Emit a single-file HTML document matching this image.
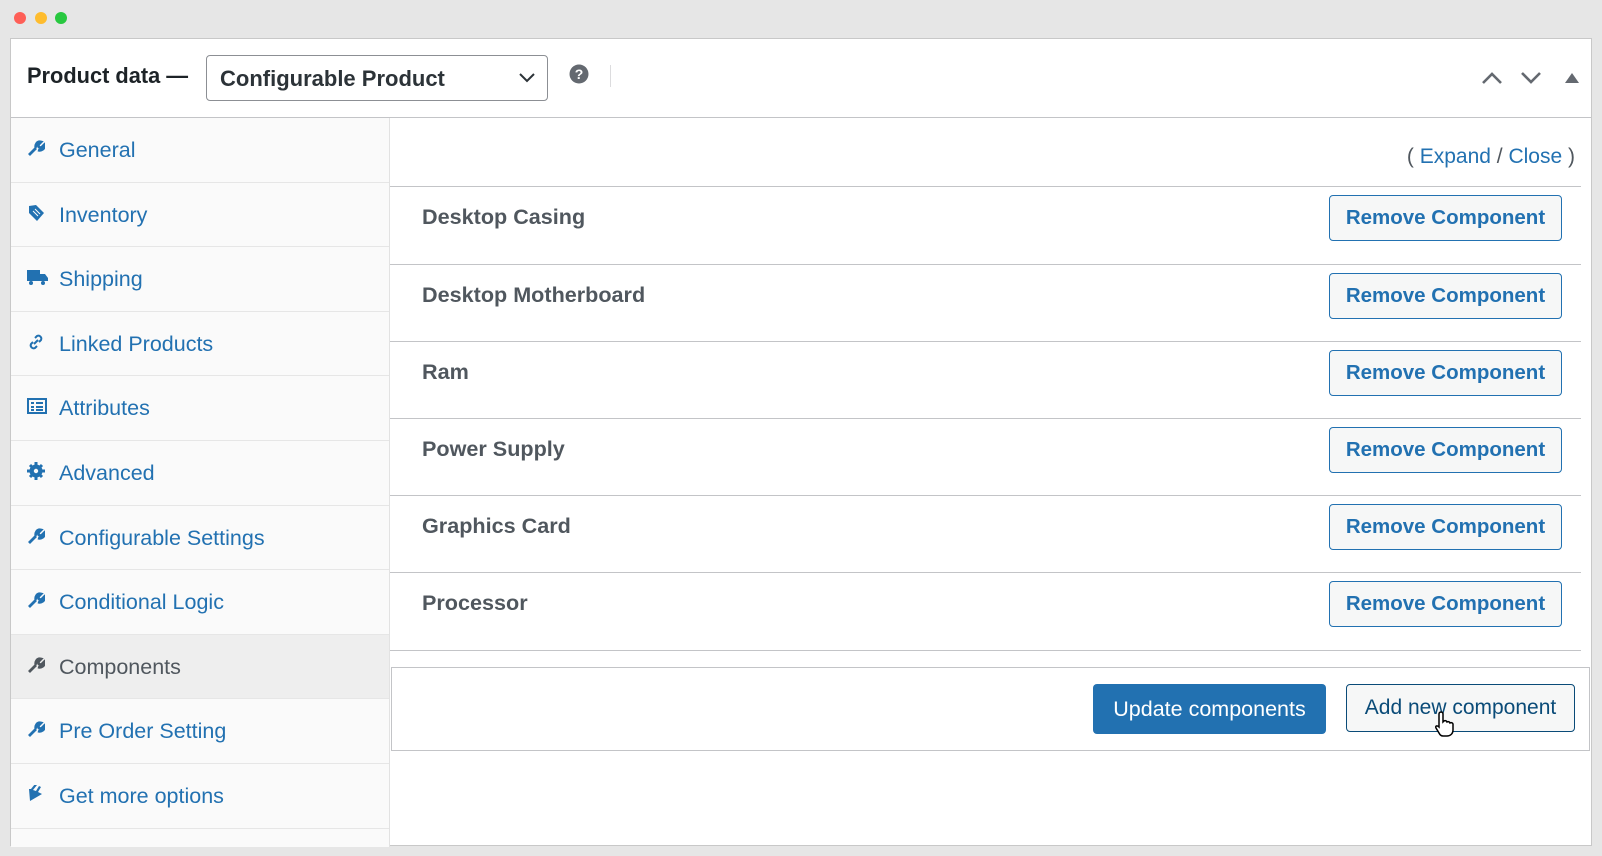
<!DOCTYPE html>
<html><head><meta charset="utf-8"><style>
*{box-sizing:border-box;margin:0;padding:0}
body{width:1602px;height:856px;background:#e6e6e6;font-family:"Liberation Sans",Arial,sans-serif;position:relative;overflow:hidden}
.dot{position:absolute;top:12px;width:12px;height:12px;border-radius:50%}
.panel{position:absolute;left:10px;top:38px;width:1582px;height:808px;background:#fff;border:1px solid #c8c8c8}
.hdr{position:absolute;left:0;top:0;width:100%;height:79px;border-bottom:1px solid #c3c4c7}
.abs{position:absolute}
.side{position:absolute;left:0;top:79px;width:379px;height:729px;background:#fafafa;border-right:1px solid #e2e2e2}
.item{height:64.6px;border-bottom:1px solid #e6e6e6;position:relative;color:#2271b1;font-size:21.5px}
.item span{position:absolute;left:48px;top:20px}
.item svg{position:absolute;left:16px;top:21px}
.item.sel{background:#eee;color:#50575e}
.row{position:absolute;left:379px;width:1191px;height:78px;border-top:1px solid #c3c4c7}
.row .t{position:absolute;left:32px;top:17px;font-size:21.6px;font-weight:bold;color:#50575e}
.row .b{position:absolute;right:19px;top:8px;width:233px;height:46px;border:1.5px solid #2271b1;border-radius:4px;background:#f6f7f7;color:#2271b1;font-weight:bold;font-size:20.5px;text-align:center;line-height:43px}
</style></head><body>
<div class="dot" style="left:14px;background:#fe5f57"></div>
<div class="dot" style="left:35px;background:#febc2e"></div>
<div class="dot" style="left:55px;background:#28c840"></div>
<div class="panel">
 <div class="hdr">
  <div class="abs" style="left:16px;top:24px;font-size:21.8px;font-weight:bold;color:#1d2327">Product data —</div>
  <div class="abs" style="left:195px;top:16px;width:342px;height:46px;border:1px solid #8c8f94;border-radius:4px;font-size:22px;font-weight:bold;color:#2c3338;padding:10px 13px">Configurable Product
   <svg class="abs" style="right:12px;top:17px" width="16" height="10" viewBox="0 0 16 10"><path d="M1 1l7 7 7-7" fill="none" stroke="#2c3338" stroke-width="2"/></svg></div>
  <svg class="abs" style="left:558px;top:25px" width="20" height="20" viewBox="0 0 20 20"><circle cx="10" cy="10" r="9.5" fill="#646970"/><text x="10" y="15" text-anchor="middle" font-size="14" font-weight="bold" fill="#fff" font-family="Liberation Sans">?</text></svg>
  <div class="abs" style="left:599px;top:26px;width:1px;height:22px;background:#dcdcde"></div>
  <svg class="abs" style="left:1470px;top:32px" width="22" height="14" viewBox="0 0 22 14"><path d="M2 12l9-9 9 9" fill="none" stroke="#646970" stroke-width="2.6"/></svg>
  <svg class="abs" style="left:1509px;top:32px" width="22" height="14" viewBox="0 0 22 14"><path d="M2 2l9 9 9-9" fill="none" stroke="#646970" stroke-width="2.6"/></svg>
  <svg class="abs" style="left:1554px;top:34px" width="14" height="10" viewBox="0 0 14 10"><path d="M0 10L7 0l7 10z" fill="#646970"/></svg>
 </div>
 <div class="side">
  <div class="item"><svg width="18" height="18" viewBox="0 0 18 18"><path d="M2 16l7-7M9 9c-1-3 1-7 5-6l-3 3 1 2 2 1 3-3c1 4-3 6-6 5" fill="none" stroke="#2271b1" stroke-width="2.8"/></svg><span>General</span></div>
  <div class="item"><svg width="18" height="18" viewBox="0 0 18 18"><path d="M9 1l8 8-7 8-8-8 0-7z" fill="#2271b1"/><path d="M6 7l5 5M8 5l5 5" stroke="#fafafa" stroke-width="1"/></svg><span>Inventory</span></div>
  <div class="item"><svg width="22" height="18" viewBox="0 0 22 18"><path d="M0 2h13v11H0zM13 6h5l3 4v3h-8z" fill="#2271b1"/><circle cx="4" cy="15" r="2" fill="#2271b1"/><circle cx="16" cy="15" r="2" fill="#2271b1"/></svg><span>Shipping</span></div>
  <div class="item"><svg width="18" height="18" viewBox="0 0 18 18"><path d="M8 5l2-2a3 3 0 014 4l-2 2M10 13l-2 2a3 3 0 01-4-4l2-2M7 11l4-4" fill="none" stroke="#2271b1" stroke-width="2"/></svg><span>Linked Products</span></div>
  <div class="item"><svg width="20" height="18" viewBox="0 0 20 18"><rect x="1" y="2" width="18" height="14" fill="none" stroke="#2271b1" stroke-width="2"/><path d="M4 6h3M9 6h7M4 10h3M9 10h7M4 13h3M9 13h7" stroke="#2271b1" stroke-width="2"/></svg><span>Attributes</span></div>
  <div class="item"><svg width="18" height="18" viewBox="0 0 18 18"><circle cx="9" cy="9" r="5" fill="none" stroke="#2271b1" stroke-width="3"/><path d="M9 0v18M0 9h18M3 3l12 12M15 3L3 15" stroke="#2271b1" stroke-width="3"/><circle cx="9" cy="9" r="2.2" fill="#fafafa"/></svg><span>Advanced</span></div>
  <div class="item"><svg width="18" height="18" viewBox="0 0 18 18"><path d="M2 16l7-7M9 9c-1-3 1-7 5-6l-3 3 1 2 2 1 3-3c1 4-3 6-6 5" fill="none" stroke="#2271b1" stroke-width="2.8"/></svg><span>Configurable Settings</span></div>
  <div class="item"><svg width="18" height="18" viewBox="0 0 18 18"><path d="M2 16l7-7M9 9c-1-3 1-7 5-6l-3 3 1 2 2 1 3-3c1 4-3 6-6 5" fill="none" stroke="#2271b1" stroke-width="2.8"/></svg><span>Conditional Logic</span></div>
  <div class="item sel"><svg width="18" height="18" viewBox="0 0 18 18"><path d="M2 16l7-7M9 9c-1-3 1-7 5-6l-3 3 1 2 2 1 3-3c1 4-3 6-6 5" fill="none" stroke="#50575e" stroke-width="2.8"/></svg><span>Components</span></div>
  <div class="item"><svg width="18" height="18" viewBox="0 0 18 18"><path d="M2 16l7-7M9 9c-1-3 1-7 5-6l-3 3 1 2 2 1 3-3c1 4-3 6-6 5" fill="none" stroke="#2271b1" stroke-width="2.8"/></svg><span>Pre Order Setting</span></div>
  <div class="item"><svg width="18" height="18" viewBox="0 0 18 18"><path d="M2 4l1 12 12-7-4-2 3-5-2-1-3 5-3-1 4-5-2-1-4 5z" fill="#2271b1"/></svg><span>Get more options</span></div>
 </div>
 <div class="abs" style="right:16px;top:106px;font-size:21px;color:#50575e">( <span style="color:#2271b1">Expand</span> / <span style="color:#2271b1">Close</span> )</div>
 <div class="row" style="top:147px"><div class="t">Desktop Casing</div><div class="b">Remove Component</div></div>
 <div class="row" style="top:225px"><div class="t">Desktop Motherboard</div><div class="b">Remove Component</div></div>
 <div class="row" style="top:302px"><div class="t">Ram</div><div class="b">Remove Component</div></div>
 <div class="row" style="top:379px"><div class="t">Power Supply</div><div class="b">Remove Component</div></div>
 <div class="row" style="top:456px"><div class="t">Graphics Card</div><div class="b">Remove Component</div></div>
 <div class="row" style="top:533px"><div class="t">Processor</div><div class="b">Remove Component</div></div>
 <div class="abs" style="left:379px;top:611px;width:1191px;border-top:1px solid #c3c4c7"></div>
 <div class="abs" style="left:380px;top:628px;width:1199px;height:84px;border:1.5px solid #c3c4c7"></div>
 <div class="abs" style="left:1082px;top:645px;width:233px;height:50px;background:#2271b1;border-radius:4px;color:#fff;font-size:21.5px;text-align:center;line-height:50px">Update components</div>
 <div class="abs" style="left:1335px;top:645px;width:229px;height:48px;background:#f6f7f7;border:1.5px solid #0a4b78;border-radius:4px;color:#0a4b78;font-size:21px;text-align:center;line-height:45px">Add new component</div>
 <svg class="abs" style="left:1422px;top:672px" width="22" height="26" viewBox="0 0 22 26"><path d="M6 14V3a2 2 0 014 0v8l1-1a2 2 0 013 1 2 2 0 013 1 2 2 0 013 1v6c0 4-3 6-6 6H10c-2 0-3-1-4-3l-3-5c-1-2 1-3 3-1z" fill="#fff" stroke="#000" stroke-width="1.5"/></svg>
</div>
</body></html>
